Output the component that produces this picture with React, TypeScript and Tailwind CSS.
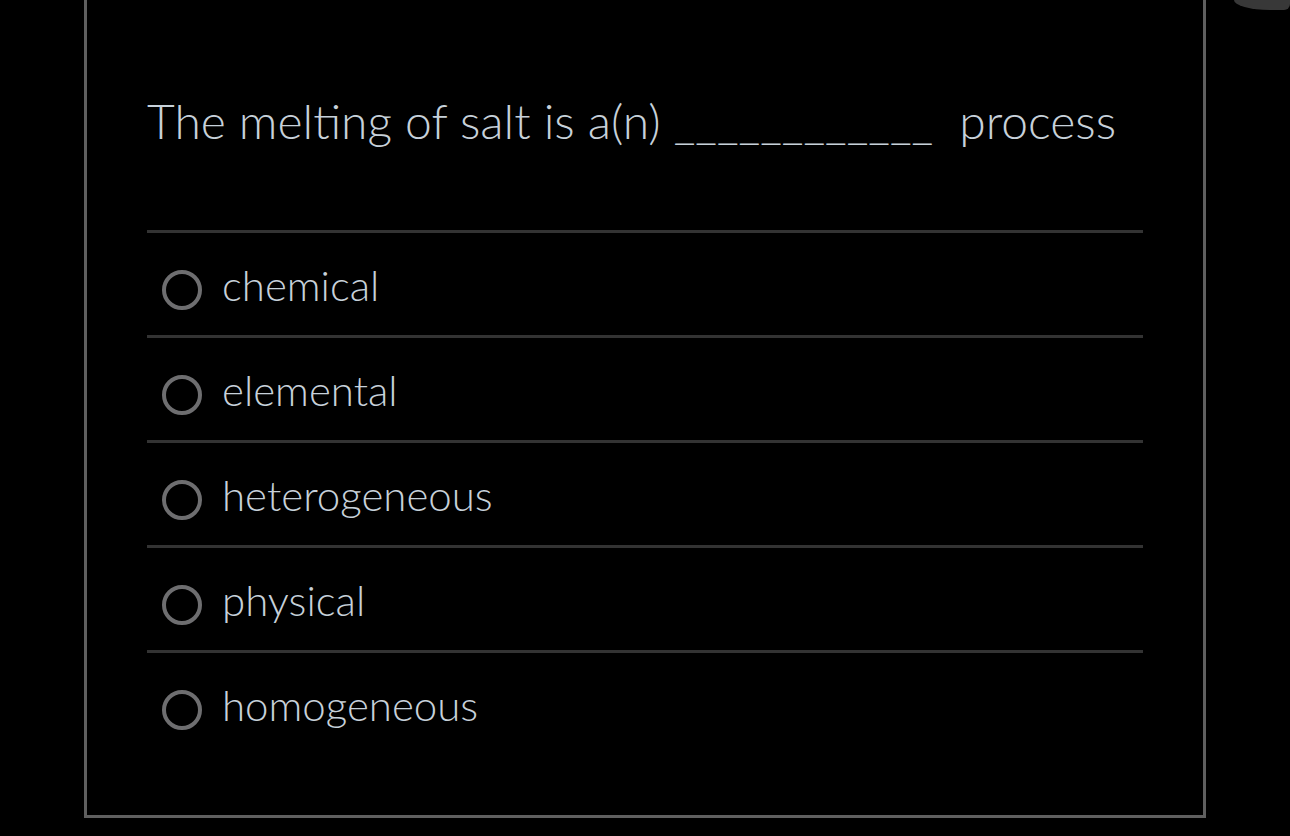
const options = [
  "chemical",
  "elemental",
  "heterogeneous",
  "physical",
  "homogeneous",
];

function RadioOption({ label }: { label: string }) {
  return (
    <label className="flex h-[105px] cursor-pointer items-start border-t-[3px] border-[#333333] pl-[15px] pt-[28px]">
      <span className="mt-[9px] h-[40px] w-[40px] shrink-0 rounded-full border-[4px] border-[#6e6e70]" />
      <span className="ml-[20px] text-[42px] leading-[48px] font-light text-[#c7d1da]">
        {label}
      </span>
    </label>
  );
}

export default function App() {
  return (
    <main
      className="relative h-[836px] w-full overflow-hidden bg-black"
      style={{ fontFamily: "Lato, 'Noto Sans', sans-serif" }}
    >
      <div className="absolute right-0 top-0 h-[10px] w-[56px] rounded-bl-[36px_10px] rounded-br-[6px] bg-[#383838]" />

      <div className="ml-[84px] h-[818px] w-[1122px] border-x-[3px] border-b-[3px] border-[#5f5f5f] px-[60px]">
        <p className="pt-[91px] text-[48px] leading-[60px] font-light text-[#c7d1da]">
          The melting of salt is a(n) ____________ &nbsp;process
        </p>

        <div className="mt-[79px]">
          {options.map(option => (
            <RadioOption key={option} label={option} />
          ))}
        </div>
      </div>
    </main>
  );
}
